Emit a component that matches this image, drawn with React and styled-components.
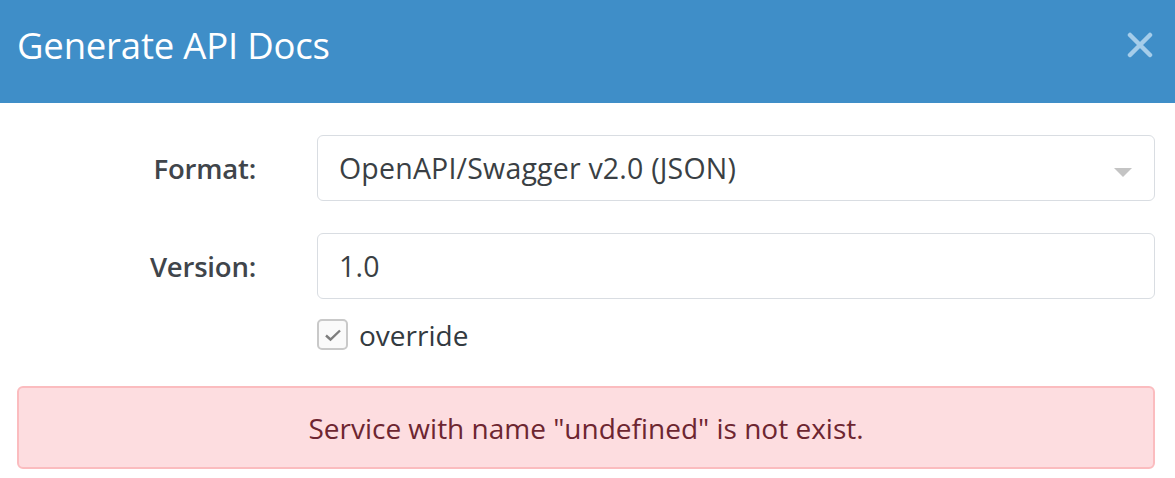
import React from "react";
import styled, { createGlobalStyle } from "styled-components";

const GlobalStyle = createGlobalStyle`
  body {
    margin: 0;
    background: #fff;
    font-family: "Open Sans", "Noto Sans", sans-serif;
  }
`;

const Modal = styled.div`
  width: 1175px;
  height: 478px;
  background: #fff;
`;

const Header = styled.div`
  height: 103px;
  background: #3f8ec8;
  display: flex;
  align-items: center;
  justify-content: space-between;
  padding: 0 21px 14px 17px;
  box-sizing: border-box;
`;

const Title = styled.h4`
  margin: 0;
  font-size: 36.5px;
  font-weight: 400;
  color: #fff;
  letter-spacing: -0.2px;
`;

const Close = styled.button`
  border: 0;
  background: none;
  padding: 0;
  width: 28px;
  height: 28px;
  display: flex;
  align-items: center;
  justify-content: center;
  cursor: pointer;
`;

const Body = styled.div`
  padding: 32px 20px 0 17px;
`;

const FormRow = styled.div`
  display: grid;
  grid-template-columns: 239px 838px;
  column-gap: 61px;
  align-items: center;
  margin-bottom: ${(p) => p.$gap || 0}px;
`;

const Label = styled.label`
  text-align: right;
  font-size: 27.5px;
  font-weight: 600;
  color: #40454b;
  letter-spacing: -0.2px;
`;

const Field = styled.div`
  position: relative;
  height: 66px;
  box-sizing: border-box;
  border: 1px solid #d9dde2;
  border-radius: 6px;
  display: flex;
  align-items: center;
  padding: 0 21px;
  font-size: 28.5px;
  color: #3a3f44;
  letter-spacing: 0.2px;
`;

const Caret = styled.span`
  position: absolute;
  right: 22px;
  top: 32px;
  width: 0;
  height: 0;
  border-left: 9px solid transparent;
  border-right: 9px solid transparent;
  border-top: 9px solid #c4c4c4;
`;

const CheckRow = styled.label`
  display: flex;
  align-items: center;
  gap: 11px;
  height: 31px;
  font-size: 28px;
  color: #333a40;
`;

const Box = styled.span`
  width: 31px;
  height: 31px;
  box-sizing: border-box;
  border: 2px solid #c9c9c9;
  border-radius: 5px;
  background: #fafafa;
  display: flex;
  align-items: center;
  justify-content: center;
`;

const Alert = styled.div`
  margin-top: 36px;
  height: 83px;
  box-sizing: border-box;
  border: 2px solid #fbbcbf;
  border-radius: 6px;
  background: #fddde0;
  color: #6d2631;
  font-size: 28px;
  display: flex;
  align-items: center;
  justify-content: center;
`;

export default function App() {
  return (
    <>
      <GlobalStyle />
      <Modal>
        <Header>
          <Title>Generate API Docs</Title>
          <Close aria-label="close">
            <svg width="26" height="26" viewBox="0 0 26 26">
              <path
                d="M3 3 L23 23 M23 3 L3 23"
                stroke="#a5cdea"
                strokeWidth="4.5"
                strokeLinecap="round"
              />
            </svg>
          </Close>
        </Header>
        <Body>
          <FormRow $gap={32}>
            <Label>Format:</Label>
            <Field>
              OpenAPI/Swagger v2.0 (JSON)
              <Caret />
            </Field>
          </FormRow>
          <FormRow $gap={20}>
            <Label>Version:</Label>
            <Field>1.0</Field>
          </FormRow>
          <FormRow>
            <span />
            <CheckRow>
              <Box>
                <svg width="18" height="14" viewBox="0 0 18 14">
                  <path
                    d="M2 7.5 L6.5 11.5 L16 2.5"
                    fill="none"
                    stroke="#7d7d7d"
                    strokeWidth="2.4"
                  />
                </svg>
              </Box>
              override
            </CheckRow>
          </FormRow>
          <Alert>Service with name "undefined" is not exist.</Alert>
        </Body>
      </Modal>
    </>
  );
}
